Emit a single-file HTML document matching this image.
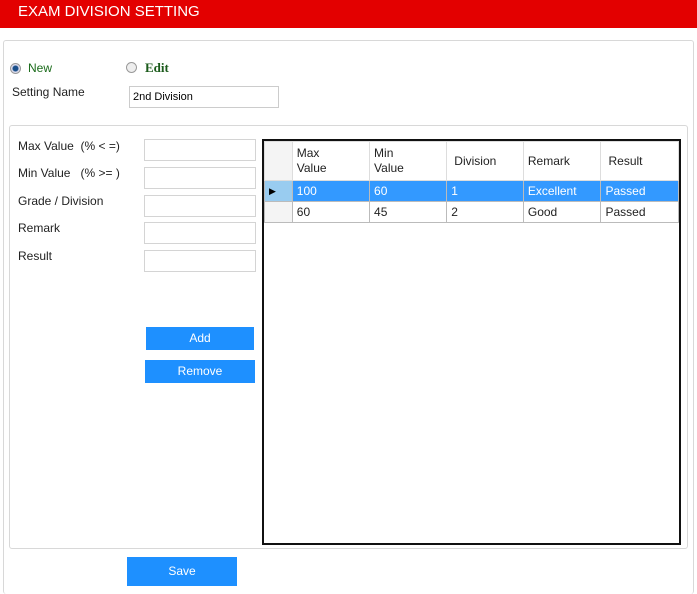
<!DOCTYPE html>
<html style="height:594px;overflow:hidden"><head><style>
*{box-sizing:border-box;margin:0;padding:0}
body{width:697px;height:594px;background:#fff;font-family:"Liberation Sans","DejaVu Sans",sans-serif;position:relative;overflow:hidden;font-size:12px;color:#222}
.a{position:absolute}
.hdr{left:0;top:0;width:697px;height:28px;background:#e30000;color:#fff;font-size:15px;padding:3px 0 0 18px}
.box{border:1px solid #d8d8d8;border-radius:3px}
.inp{border:1px solid #d4d4d4;background:#fff;height:22px;width:112px;left:144px}
.lbl{left:18px;font-size:12px}
.btn{background:#1e90ff;color:#fff;text-align:center;font-size:12px}
table{border-collapse:collapse;font-size:12px}
td{border:1px solid #bbb;padding:0 4px;height:21px;vertical-align:middle}
.rad{width:11px;height:11px;border-radius:50%;border:1px solid #999;background:#eee}
</style></head><body>
<div class="a hdr">EXAM DIVISION SETTING</div>
<div class="a box" style="left:3px;top:40px;width:691px;height:554px;border-bottom:none"></div>
<div class="a rad" style="left:10px;top:63px;background:radial-gradient(circle,#1a4f8a 0 2.5px,#dde 3.5px)"></div>
<div class="a" style="left:28px;top:61px;color:#1a6b1a;font-size:12px">New</div>
<div class="a rad" style="left:126px;top:62px"></div>
<div class="a" style="left:145px;top:60px;color:#1a5a1a;font-weight:bold;font-family:'Liberation Serif',serif;font-size:13px">Edit</div>
<div class="a" style="left:12px;top:85px;font-size:12px">Setting Name</div>
<div class="a" style="left:129px;top:86px;width:150px;height:22px;border:1px solid #ccc;padding:4px 3px;font-size:11px;color:#000">2nd Division</div>
<div class="a box" style="left:9px;top:125px;width:679px;height:424px"></div>
<div class="a lbl" style="top:139px">Max Value &nbsp;(% &lt; =)</div>
<div class="a lbl" style="top:166px">Min Value &nbsp;&nbsp;(% &gt;= )</div>
<div class="a lbl" style="top:194px">Grade / Division</div>
<div class="a lbl" style="top:221px">Remark</div>
<div class="a lbl" style="top:249px">Result</div>
<div class="a inp" style="top:139px"></div>
<div class="a inp" style="top:167px"></div>
<div class="a inp" style="top:195px"></div>
<div class="a inp" style="top:222px"></div>
<div class="a inp" style="top:250px"></div>
<div class="a btn" style="left:146px;top:327px;width:108px;height:23px;line-height:23px">Add</div>
<div class="a btn" style="left:145px;top:360px;width:110px;height:23px;line-height:23px">Remove</div>
<div class="a btn" style="left:127px;top:557px;width:110px;height:29px;line-height:29px">Save</div>
<div class="a" style="left:262px;top:139px;width:419px;height:406px;border:2px solid #111;background:#fff">
<table style="position:absolute;left:0;top:0">
<tr style="background:#fff;height:39px"><td style="width:28px;background:#f4f4f4;border-color:#ddd;height:39px"></td><td style="width:78px;border-color:#ddd;line-height:15px">Max<br>Value</td><td style="width:78px;border-color:#ddd;line-height:15px">Min<br>Value</td><td style="width:77px;border-color:#ddd;padding-left:7px">Division</td><td style="width:78px;border-color:#ddd">Remark</td><td style="width:78px;border-color:#ddd;padding-left:7px">Result</td></tr>
<tr style="background:#3399ff;color:#fff"><td style="background:#99ccf0;color:#000;font-size:9px;padding-left:4px">&#9654;</td><td>100</td><td>60</td><td>1</td><td>Excellent</td><td>Passed</td></tr>
<tr><td style="background:#f4f4f4"></td><td>60</td><td>45</td><td>2</td><td>Good</td><td>Passed</td></tr>
</table></div>
</body></html>
